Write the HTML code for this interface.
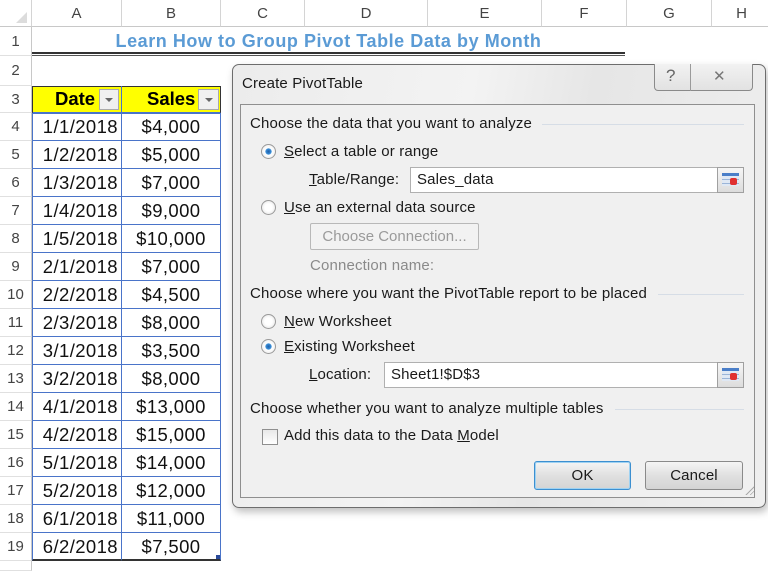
<!DOCTYPE html>
<html><head><meta charset="utf-8"><style>
*{margin:0;padding:0;box-sizing:border-box}
body{width:768px;height:567px;background:#fff;position:relative;overflow:hidden;font-family:"Liberation Sans",Arial,sans-serif}
.a{position:absolute}
.ch{top:0;height:27px;line-height:27px;text-align:center;color:#444;font-size:15px;border-right:1px solid #d4d4d4;border-bottom:1px solid #c8c8c8;background:#fff}
.rh{left:0;width:32px;text-align:center;color:#444;font-size:15px;border-right:1px solid #c8c8c8;border-bottom:1px solid #e0e0e0}
.c{font-size:18.5px;letter-spacing:.4px;color:#111;border-right:1px solid #4a74c9;border-bottom:1px solid #4a74c9;line-height:27px;white-space:nowrap}
.d{left:32px;width:90px;text-align:right;padding-right:3px;border-left:1px solid #4a74c9}
.s{left:122px;width:99px;text-align:center}
.dlg{font-size:15px;letter-spacing:.15px;color:#1a1a1a;white-space:nowrap}
.u{text-decoration:underline}
.radio{width:15px;height:15px;border-radius:50%;border:1px solid #9a9a9a;background:radial-gradient(circle,#fff 40%,#ddd)}
.radio.on{background:radial-gradient(circle,#1e5ea8 0,#3b8fd8 30%,#fff 38%,#e8e8e8)}
.hl{height:1px;background:#d6dde6}
.inp{background:#fff;border:1px solid #b0b0b0;height:26px;line-height:24px;padding-left:6px}
.ib{width:27px;height:26px;border:1px solid #a0a0a0;background:linear-gradient(#f6f6f6,#dcdcdc)}
.btn{border:1px solid #8a8a8a;border-radius:3px;background:linear-gradient(#f5f5f5,#e0e0e0 50%,#d4d4d4);text-align:center;line-height:27px}
</style></head><body>
<div class="a ch" style="left:0;width:32px;background:#fff"></div>
<div class="a" style="left:16px;top:12px;width:0;height:0;border-left:11px solid transparent;border-bottom:11px solid #dcdcdc"></div>
<div class="a ch" style="left:32px;width:90px">A</div>
<div class="a ch" style="left:122px;width:99px">B</div>
<div class="a ch" style="left:221px;width:84px">C</div>
<div class="a ch" style="left:305px;width:123px">D</div>
<div class="a ch" style="left:428px;width:114px">E</div>
<div class="a ch" style="left:542px;width:85px">F</div>
<div class="a ch" style="left:627px;width:85px">G</div>
<div class="a ch" style="left:712px;width:60px">H</div>
<div class="a rh" style="top:27px;height:29px;line-height:29px">1</div>
<div class="a rh" style="top:56px;height:30px;line-height:30px">2</div>
<div class="a rh" style="top:86px;height:27px;line-height:27px">3</div>
<div class="a rh" style="top:113px;height:28px;line-height:28px">4</div>
<div class="a rh" style="top:141px;height:28px;line-height:28px">5</div>
<div class="a rh" style="top:169px;height:28px;line-height:28px">6</div>
<div class="a rh" style="top:197px;height:28px;line-height:28px">7</div>
<div class="a rh" style="top:225px;height:28px;line-height:28px">8</div>
<div class="a rh" style="top:253px;height:28px;line-height:28px">9</div>
<div class="a rh" style="top:281px;height:28px;line-height:28px">10</div>
<div class="a rh" style="top:309px;height:28px;line-height:28px">11</div>
<div class="a rh" style="top:337px;height:28px;line-height:28px">12</div>
<div class="a rh" style="top:365px;height:28px;line-height:28px">13</div>
<div class="a rh" style="top:393px;height:28px;line-height:28px">14</div>
<div class="a rh" style="top:421px;height:28px;line-height:28px">15</div>
<div class="a rh" style="top:449px;height:28px;line-height:28px">16</div>
<div class="a rh" style="top:477px;height:28px;line-height:28px">17</div>
<div class="a rh" style="top:505px;height:28px;line-height:28px">18</div>
<div class="a rh" style="top:533px;height:28px;line-height:28px">19</div>
<div class="a rh" style="top:561px;height:10px"></div>
<div class="a" style="left:32px;top:31px;width:593px;text-align:center;font-weight:bold;color:#5b9bd5;font-size:18px;letter-spacing:.55px;white-space:nowrap">Learn How to Group Pivot Table Data by Month</div>
<div class="a" style="left:32px;top:52px;width:593px;height:4px;border-top:2px solid #333;border-bottom:1px solid #555"></div>
<div class="a" style="left:32px;top:86px;width:189px;height:28px;background:#ffff00;border:1px solid #333;border-bottom:2px solid #4a74c9"></div>
<div class="a" style="left:55px;top:88px;font-weight:bold;font-size:18.5px">Date</div>
<div class="a" style="left:147px;top:88px;font-weight:bold;font-size:18.5px">Sales</div>
<div class="a" style="left:99px;top:89px;width:20px;height:21px;background:#f0f0f0;border:1px solid #aaa"><div style="margin:8px auto 0;width:0;height:0;border-left:4px solid transparent;border-right:4px solid transparent;border-top:4px solid #666"></div></div>
<div class="a" style="left:198px;top:89px;width:21px;height:21px;background:#f0f0f0;border:1px solid #aaa"><div style="margin:8px auto 0;width:0;height:0;border-left:4px solid transparent;border-right:4px solid transparent;border-top:4px solid #666"></div></div>
<div class="a" style="left:121px;top:86px;width:1px;height:28px;background:#4a74c9"></div>
<div class="a c d" style="top:113px;height:28px">1/1/2018</div><div class="a c s" style="top:113px;height:28px">$4,000</div>
<div class="a c d" style="top:141px;height:28px">1/2/2018</div><div class="a c s" style="top:141px;height:28px">$5,000</div>
<div class="a c d" style="top:169px;height:28px">1/3/2018</div><div class="a c s" style="top:169px;height:28px">$7,000</div>
<div class="a c d" style="top:197px;height:28px">1/4/2018</div><div class="a c s" style="top:197px;height:28px">$9,000</div>
<div class="a c d" style="top:225px;height:28px">1/5/2018</div><div class="a c s" style="top:225px;height:28px">$10,000</div>
<div class="a c d" style="top:253px;height:28px">2/1/2018</div><div class="a c s" style="top:253px;height:28px">$7,000</div>
<div class="a c d" style="top:281px;height:28px">2/2/2018</div><div class="a c s" style="top:281px;height:28px">$4,500</div>
<div class="a c d" style="top:309px;height:28px">2/3/2018</div><div class="a c s" style="top:309px;height:28px">$8,000</div>
<div class="a c d" style="top:337px;height:28px">3/1/2018</div><div class="a c s" style="top:337px;height:28px">$3,500</div>
<div class="a c d" style="top:365px;height:28px">3/2/2018</div><div class="a c s" style="top:365px;height:28px">$8,000</div>
<div class="a c d" style="top:393px;height:28px">4/1/2018</div><div class="a c s" style="top:393px;height:28px">$13,000</div>
<div class="a c d" style="top:421px;height:28px">4/2/2018</div><div class="a c s" style="top:421px;height:28px">$15,000</div>
<div class="a c d" style="top:449px;height:28px">5/1/2018</div><div class="a c s" style="top:449px;height:28px">$14,000</div>
<div class="a c d" style="top:477px;height:28px">5/2/2018</div><div class="a c s" style="top:477px;height:28px">$12,000</div>
<div class="a c d" style="top:505px;height:28px">6/1/2018</div><div class="a c s" style="top:505px;height:28px">$11,000</div>
<div class="a c d" style="top:533px;height:28px;border-bottom:2px solid #333">6/2/2018</div><div class="a c s" style="top:533px;height:28px;border-bottom:2px solid #333">$7,500</div>
<div class="a" style="left:216px;top:555px;width:4px;height:4px;background:#2a4a9a"></div>

<div class="a dlg" style="left:232px;top:64px;width:534px;height:444px;border:1px solid #6d6d6d;border-radius:7px;background:linear-gradient(100deg,#ececec 0%,#f3f3f3 40%,#e6e6e6 60%,#efefef 100%);box-shadow:2px 4px 8px rgba(0,0,0,.25)"></div>
<div class="a dlg" style="left:242px;top:75px;font-size:15px">Create PivotTable</div>
<div class="a" style="left:654px;top:64px;width:99px;height:27px;border:1px solid #8a8a8a;border-top:none;border-radius:0 0 4px 4px;background:linear-gradient(#f2f2f2,#e2e2e2)"></div>
<div class="a" style="left:690px;top:64px;width:1px;height:27px;background:#9a9a9a"></div>
<div class="a" style="left:666px;top:66px;font-size:17px;color:#666">?</div>
<div class="a" style="left:713px;top:67px;font-size:15px;color:#777">✕</div>
<div class="a" style="left:240px;top:104px;width:515px;height:394px;border:1px solid #8f8f8f;background:#f0f0f0"></div>

<div class="a dlg" style="left:250px;top:115px">Choose the data that you want to analyze</div>
<div class="a hl" style="left:542px;top:124px;width:202px"></div>
<div class="a radio on" style="left:261px;top:144px"></div>
<div class="a dlg" style="left:284px;top:143px"><span class="u">S</span>elect a table or range</div>
<div class="a dlg" style="left:309px;top:171px"><span class="u">T</span>able/Range:</div>
<div class="a inp dlg" style="left:410px;top:167px;width:308px">Sales_data</div>
<div class="a ib" style="left:717px;top:167px"><div style="margin:5px 4px;width:17px;height:13px;border-top:3px solid #4a7ec8;background:repeating-linear-gradient(#dfe8f4 0 3px,#9bb5d8 3px 4px)"></div><div class="a" style="left:12px;top:10px;width:7px;height:7px;background:#e03030;border-radius:2px"></div></div>
<div class="a radio" style="left:261px;top:200px"></div>
<div class="a dlg" style="left:284px;top:199px"><span class="u">U</span>se an external data source</div>
<div class="a" style="left:310px;top:223px;width:169px;height:27px;border:1px solid #b8b8b8;border-radius:2px;background:#f2f2f2;color:#9a9a9a;font-size:15px;line-height:25px;text-align:center;white-space:nowrap">Choose Connection...</div>
<div class="a dlg" style="left:310px;top:257px;color:#8a8a8a">Connection name:</div>
<div class="a dlg" style="left:250px;top:285px">Choose where you want the PivotTable report to be placed</div>
<div class="a hl" style="left:658px;top:294px;width:86px"></div>
<div class="a radio" style="left:261px;top:314px"></div>
<div class="a dlg" style="left:284px;top:313px"><span class="u">N</span>ew Worksheet</div>
<div class="a radio on" style="left:261px;top:339px"></div>
<div class="a dlg" style="left:284px;top:338px"><span class="u">E</span>xisting Worksheet</div>
<div class="a dlg" style="left:309px;top:366px"><span class="u">L</span>ocation:</div>
<div class="a inp dlg" style="left:384px;top:362px;width:334px">Sheet1!$D$3</div>
<div class="a ib" style="left:717px;top:362px"><div style="margin:5px 4px;width:17px;height:13px;border-top:3px solid #4a7ec8;background:repeating-linear-gradient(#dfe8f4 0 3px,#9bb5d8 3px 4px)"></div><div class="a" style="left:12px;top:10px;width:7px;height:7px;background:#e03030;border-radius:2px"></div></div>
<div class="a dlg" style="left:250px;top:400px">Choose whether you want to analyze multiple tables</div>
<div class="a hl" style="left:615px;top:409px;width:129px"></div>
<div class="a" style="left:262px;top:429px;width:16px;height:16px;border:1px solid #8f8f8f;background:linear-gradient(#e8e8e8,#fff)"></div>
<div class="a dlg" style="left:284px;top:427px">Add this data to the Data <span class="u">M</span>odel</div>
<div class="a btn dlg" style="left:534px;top:461px;width:97px;height:29px;border:1px solid #3c8fd0;box-shadow:inset 0 0 0 1px #9fd2f2">OK</div>
<div class="a btn dlg" style="left:645px;top:461px;width:98px;height:29px">Cancel</div>
<div class="a" style="left:744px;top:485px;width:10px;height:10px;background:repeating-linear-gradient(135deg,transparent 0 2px,#aaa 2px 3px);clip-path:polygon(100% 0,100% 100%,0 100%)"></div>
</body></html>
